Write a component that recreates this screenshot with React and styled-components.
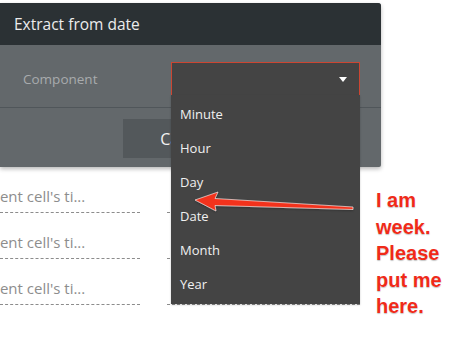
import React from "react";
import styled, { createGlobalStyle } from "styled-components";

const Global = createGlobalStyle`
  html, body { margin: 0; padding: 0; background: #ffffff; }
  body { width: 474px; height: 347px; overflow: hidden; }
  * { box-sizing: border-box; }
`;

const Page = styled.div`
  position: relative;
  width: 474px;
  height: 347px;
  font-family: "Open Sans", "DejaVu Sans", sans-serif;
`;

const Dialog = styled.div`
  margin-top: 3px;
  width: 381px;
  background: #63686b;
  border-top-right-radius: 3px;
  border-bottom-right-radius: 2px;
  box-shadow: 0 2px 4px rgba(0, 0, 0, 0.28);
  position: relative;
  z-index: 2;
`;

const Header = styled.div`
  height: 42px;
  background: #2b3134;
  border-top-right-radius: 3px;
  display: flex;
  align-items: center;
  padding-left: 14px;
  color: #ececec;
  font-size: 15.5px;
`;

const FieldRow = styled.div`
  display: flex;
  align-items: center;
  padding: 17px 0 12px 23px;
  border-bottom: 1px solid #50565a;
`;

const Label = styled.div`
  width: 148px;
  color: #a8abad;
  font-size: 13.5px;
`;

const SelectWrap = styled.div`
  position: relative;
  width: 189px;
  z-index: 5;
`;

const SelectBox = styled.div`
  height: 33px;
  background: #444444;
  border: 1px solid #cc4632;
  border-bottom: 0;
  display: flex;
  align-items: center;
  justify-content: flex-end;
  padding-right: 12px;
`;

const Caret = styled.span`
  width: 0;
  height: 0;
  border-left: 4px solid transparent;
  border-right: 4px solid transparent;
  border-top: 5px solid #ffffff;
  margin-top: 1px;
`;

const List = styled.div`
  position: absolute;
  top: 100%;
  left: 0;
  width: 100%;
  background: #444444;
  padding: 2px 0 3px;
  box-shadow: 0 1px 2px rgba(0, 0, 0, 0.2);
`;

const Item = styled.div`
  height: 34px;
  display: flex;
  align-items: center;
  padding-left: 9px;
  color: #f0f0f0;
  font-size: 13px;
`;

const Footer = styled.div`
  height: 59px;
  padding: 11px 0 0 123px;
`;

const Button = styled.div`
  width: 124px;
  height: 39px;
  background: #53585b;
  color: #f2f2f2;
  font-size: 16px;
  display: flex;
  align-items: center;
  justify-content: center;
`;

const Content = styled.div`
  display: flex;
  align-items: flex-start;
`;

const Rows = styled.div`
  width: 360px;
  display: flex;
  flex-direction: column;
`;

const Row = styled.div`
  height: 46px;
  display: flex;
`;

const Cell = styled.div`
  width: ${(p) => p.$w}px;
  margin-left: ${(p) => p.$ml || 0}px;
  height: 100%;
  display: flex;
  align-items: flex-end;
  border-bottom: 1px dashed #8c8c8c;
  overflow: hidden;
`;

const CellText = styled.div`
  margin-left: -31px;
  padding-bottom: 6px;
  line-height: 20px;
  font-size: 15px;
  color: #8d8d8d;
  white-space: nowrap;
`;

const Note = styled.div`
  margin-left: 16px;
  padding-top: 20px;
  font-family: "Liberation Sans", Arial, sans-serif;
  font-weight: bold;
  font-size: 20px;
  line-height: 26.5px;
  color: #f02a18;
  text-shadow: 0 0 1px #fff, 0 1px 1px rgba(0, 0, 0, 0.25);
`;

const ArrowLayer = styled.svg`
  position: absolute;
  left: 0;
  top: 0;
  width: 474px;
  height: 347px;
  pointer-events: none;
  z-index: 10;
`;

const items = ["Minute", "Hour", "Day", "Date", "Month", "Year"];

export default function App() {
  return (
    <Page>
      <Global />
      <Dialog>
        <Header>Extract from date</Header>
        <FieldRow>
          <Label>Component</Label>
          <SelectWrap>
            <SelectBox>
              <Caret />
            </SelectBox>
            <List>
              {items.map((it) => (
                <Item key={it}>{it}</Item>
              ))}
            </List>
          </SelectWrap>
        </FieldRow>
        <Footer>
          <Button>Cancel</Button>
        </Footer>
      </Dialog>
      <Content>
        <Rows>
          {[0, 1, 2].map((i) => (
            <Row key={i}>
              <Cell $w={140}>
                <CellText>Current cell's ti...</CellText>
              </Cell>
              <Cell $w={193} $ml={27} />
            </Row>
          ))}
        </Rows>
        <Note>
          I am
          <br />
          week.
          <br />
          Please
          <br />
          put me
          <br />
          here.
        </Note>
      </Content>
      <ArrowLayer viewBox="0 0 474 347">
        <defs>
          <filter id="sh" x="-10%" y="-50%" width="120%" height="200%">
            <feDropShadow dx="0" dy="1" stdDeviation="0.8" floodColor="#000" floodOpacity="0.3" />
          </filter>
        </defs>
        <polygon
          points="195,197 218,189 215,195.5 353,204 353,206.5 215,202.5 216,208"
          fill="#f2331d"
          stroke="#ffffff"
          strokeWidth="0.6"
          strokeLinejoin="round"
          filter="url(#sh)"
        />
      </ArrowLayer>
    </Page>
  );
}
